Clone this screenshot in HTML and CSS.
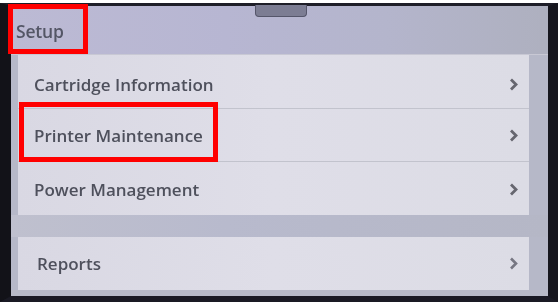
FILE: index.html
```html
<!DOCTYPE html>
<html>
<head>
<meta charset="utf-8">
<link rel="stylesheet" href="styles.css">
</head>
<body>
<div class="device">
  <div class="screen">
    <div class="header"><span class="title">Setup</span></div>
    <div class="tab"></div>
    <div class="group">
      <div class="row first"><span class="label">Cartridge Information</span><svg class="chev" width="9" height="13" viewBox="0 0 9 13"><path d="M2 1.5 L7 6.5 L2 11.5" fill="none" stroke="#66666f" stroke-width="2.8"/></svg></div>
      <div class="row"><span class="label">Printer Maintenance</span><svg class="chev" width="9" height="13" viewBox="0 0 9 13"><path d="M2 1.5 L7 6.5 L2 11.5" fill="none" stroke="#66666f" stroke-width="2.8"/></svg></div>
      <div class="row third"><span class="label">Power Management</span><svg class="chev" width="9" height="13" viewBox="0 0 9 13"><path d="M2 1.5 L7 6.5 L2 11.5" fill="none" stroke="#66666f" stroke-width="2.8"/></svg></div>
    </div>
    <div class="spacer"></div>
    <div class="group">
      <div class="row last"><span class="label reports">Reports</span><svg class="chev" width="9" height="13" viewBox="0 0 9 13"><path d="M2 1.5 L7 6.5 L2 11.5" fill="none" stroke="#767682" stroke-width="2.6"/></svg></div>
    </div>
    <div class="bottom"></div>
  </div>
</div>
<div class="mark mark-setup"></div>
<div class="mark mark-maint"></div>
</body>
</html>
```
FILE: styles.css
```css
html, body {
  margin: 0;
  padding: 0;
  background: #ffffff;
}
body {
  width: 558px;
  height: 302px;
  position: relative;
  overflow: hidden;
  font-family: "Open Sans", "DejaVu Sans", sans-serif;
}
.device {
  margin-top: 3px;
  height: 299px;
  box-sizing: border-box;
  background: #15151c;
  border-top: 3px solid #1e1e28;
  border-left: 11px solid #121218;
  border-right: 10px solid #16161e;
  border-bottom: 6px solid #1a1a24;
}
.screen {
  position: relative;
  height: 290px;
  display: flex;
  flex-direction: column;
  background: #b6b8c8;
  filter: blur(0.45px);
}
.header {
  height: 49px;
  flex: none;
  display: flex;
  align-items: center;
  padding-left: 5px;
  background: linear-gradient(90deg, #bcbad4 0%, #b7b6d2 40%, #b4b5cc 70%, #aeb0bf 100%);
  border-bottom: 1px solid #c8c8d4;
  box-sizing: border-box;
}
.title {
  font-size: 17.5px;
  font-weight: 600;
  color: #545666;
  letter-spacing: -0.2px;
  margin-top: 1px;
}
.tab {
  position: absolute;
  left: 244px;
  top: -1px;
  width: 52px;
  height: 12px;
  box-sizing: border-box;
  background: #7c7d93;
  border: 1px solid #55566a;
  border-top: none;
  border-radius: 0 0 4px 4px;
}
.group {
  margin: 0 19px 0 7px;
  display: flex;
  flex-direction: column;
  background: #dddde5;
}
.row {
  height: 53px;
  display: flex;
  align-items: center;
  justify-content: space-between;
  padding: 0 10px 0 16px;
  box-sizing: border-box;
  border-bottom: 1px solid #c2c3cd;
  background: linear-gradient(90deg, #d9d8e3 0%, #dfdee8 50%, #dcdce5 100%);
}
.row.first {
  height: 54px;
  padding-top: 5px;
}
.row.third {
  border-bottom: none;
  padding-top: 2px;
}
.row.last {
  border-bottom: none;
  height: 53px;
}
.label {
  font-size: 17px;
  font-weight: 600;
  color: #4e505c;
  letter-spacing: 0;
}
.label.reports {
  padding-left: 3px;
}
.chev {
  margin-right: 1px;
}
.spacer {
  height: 22px;
  flex: none;
  background: linear-gradient(90deg, #bfc0ce 0%, #b8bacd 40%, #b5b7c6 100%);
}
.bottom {
  flex: 1;
  background: #b8bac8;
}
.mark {
  position: absolute;
  border: 5px solid #ff0000;
  box-sizing: border-box;
}
.mark-setup {
  left: 8px;
  top: 4px;
  width: 80px;
  height: 50px;
}
.mark-maint {
  left: 19px;
  top: 102px;
  width: 199px;
  height: 60px;
}
```
